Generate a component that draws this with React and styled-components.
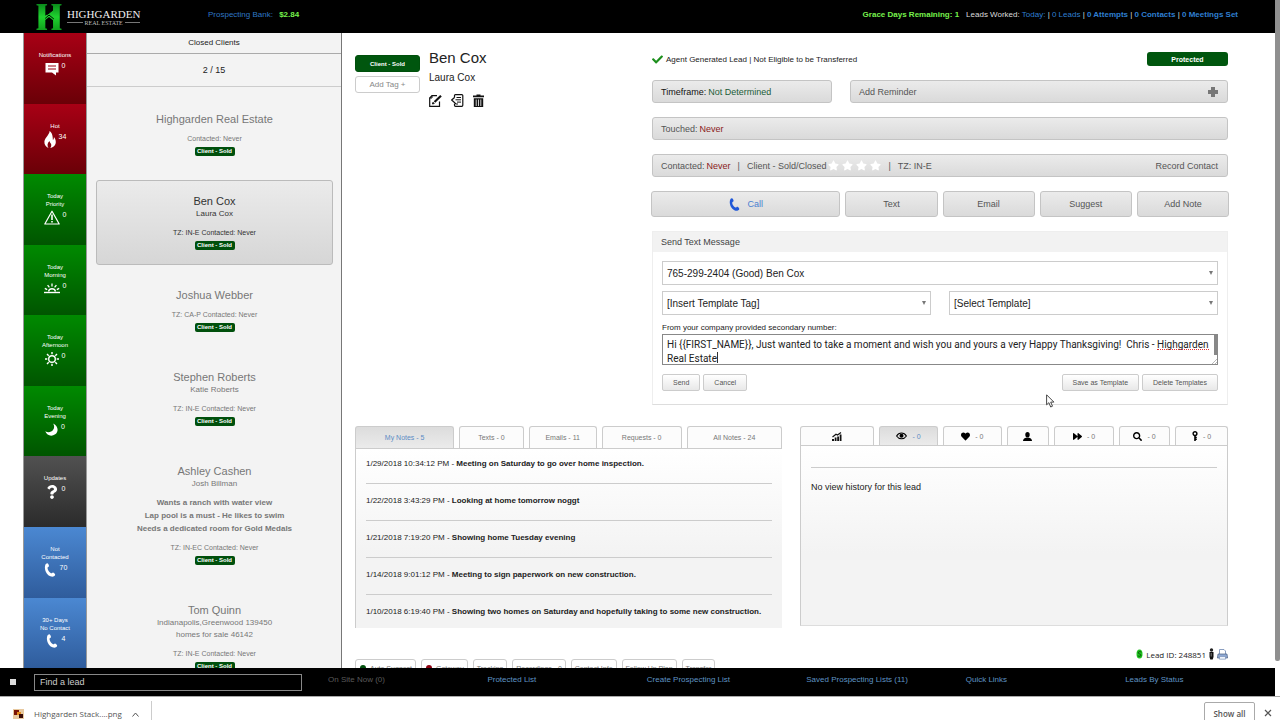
import React from "react";
import styled, { createGlobalStyle } from "styled-components";
import {
  FaCheck,
  FaHeart,
  FaForward,
  FaSearch,
  FaQuestion,
  FaStar,
} from "react-icons/fa";

const arial = `"Liberation Sans", Arial, sans-serif`;
const roboto = `Roboto, "Liberation Sans", sans-serif`;

const GlobalStyle = createGlobalStyle`
  * {
    box-sizing: border-box;
  }
  body {
    margin: 0;
    background: white;
    font-family: ${arial};
    font-size: 8px;
    color: #222;
  }
  button, input, select, textarea {
    font-family: inherit;
    margin: 0;
  }
  a {
    text-decoration: none;
    color: inherit;
  }
  h1, h2, h3, p, ul {
    margin: 0;
    padding: 0;
    font-weight: normal;
    list-style: none;
  }
`;

//icons
const MessageIcon = () => (
  <svg width="14" height="14" viewBox="0 0 14 14">
    <path d="M.5 1h13v9.500h-2.500v3L7 10.500H.5z" fill="white" />
    <path d="M3 4h8M3 7h8" stroke="#9a0012" strokeWidth="1" />
  </svg>
);

const FlameIcon = () => (
  <svg width="12" height="17" viewBox="0 0 12 17">
    <path
      d="M5.500 0C6 3 1 6.500.4 10.500.1 13.500 2 16 4.500 17 2.800 14.500 3.500 12 5.500 10c0 1.500 1.800 2.300 1.800 4 0 1.200-.4 2.200-1 3 3-.6 5.500-2.800 5.500-6C11.800 9 11 7.300 9.900 6c.1 1.300-.2 2.300-1 3C8.800 5.500 8.500 2 5.500 0z"
      fill="white"
    />
  </svg>
);

const WarningIcon = () => (
  <svg width="16" height="15" viewBox="0 0 16 15" fill="none" stroke="white">
    <path d="M8 1.200 15.200 14H.8z" strokeWidth="1.200" strokeLinejoin="round" />
    <path d="M8 4.500v5.500M8 11v1.600" strokeWidth="1.600" />
  </svg>
);

const SunriseIcon = () => (
  <svg width="16" height="14" viewBox="0 0 16 14" fill="none" stroke="white">
    <path d="M0 11.500h16" strokeWidth="1.400" />
    <path
      d="M4.500 10.500a3.600 3.600 0 0 1 7 0M8 2.500v3M3.600 4.200l1.800 2.200M12.400 4.200l-1.800 2.200M.8 7.400l2.400 1.200M15.200 7.400l-2.400 1.200"
      strokeWidth="1.300"
    />
  </svg>
);

const SunIcon = () => (
  <svg width="14" height="14" viewBox="0 0 14 14" fill="none" stroke="white">
    <circle cx="7" cy="7" r="3.300" strokeWidth="1.400" />
    <path
      d="M7 0v2.300M7 11.700V14M0 7h2.300M11.700 7H14M2 2l1.700 1.700M10.300 10.300 12 12M12 2l-1.700 1.700M3.700 10.300 2 12"
      strokeWidth="1.400"
    />
  </svg>
);

const MoonIcon = () => (
  <svg width="13" height="13" viewBox="0 0 13 13">
    <path d="M8.200.5c5 2.300 5.800 8 2 10.800C6.500 14 1.700 12.500.3 8.300c3 1.500 6 .9 7.700-1.300C9.500 5 9.500 2.800 8.200.5z" fill="white" />
  </svg>
);

const PhoneIcon = ({ size = 14 }) => (
  <svg width={size} height={size} viewBox="0 0 14 14" fill="currentColor">
    <path d="M4.200.2c.9 0 1.800 1.800 1.800 2.900 0 1-1.500.8-1.500 1.900.1 2 1.700 4.500 3.500 5.200 1 .4 1.200-1 2.200-.7 1 .4 2.200 1.700 1.900 2.600-.5 1.300-2.300 2-4 1.500C4.700 12.600 2.200 9 1.900 5 1.800 2.500 2.500.3 4.200.2z" />
  </svg>
);

const EditIcon = () => (
  <svg width="13" height="13" viewBox="0 0 13 13" fill="none" stroke="#111">
    <path d="M8 1.600H3L.7 4v8.300h9.800V7.500" strokeWidth="1.200" />
    <path d="M3 1.600V4H.7" strokeWidth="1" />
    <path d="m5.500 8 6.500-6.300" strokeWidth="2.200" />
    <path d="m3.500 10 1.700-.5-1.200-1.200z" fill="#111" />
  </svg>
);

const NoteIcon = () => (
  <svg width="13" height="13" viewBox="0 0 13 13" fill="none" stroke="#111">
    <path
      d="M3.500 3.500V1.600c0-.6.4-1 .9-1h6.400c.6 0 1 .4 1 1v9.700c0 .6-.4 1-1 1H4.500c-.6 0-1-.4-1-1V9.800M3.500 3.500.7 6l4.300 4h2"
      strokeWidth="1.200"
    />
    <path d="M5.500 3.500H10M4.500 5.800H10M6 8.100h4" strokeWidth="1" />
  </svg>
);

const TrashIcon = () => (
  <svg width="11" height="13" viewBox="0 0 11 13">
    <path d="M0 1.500h3.500V.5h4v1H11v1.800H0zM.8 4.200h9.400V13H.8z" fill="#111" />
    <path d="M3.200 5.500V12M5.500 5.500V12M7.800 5.500V12" stroke="white" strokeWidth=".8" />
  </svg>
);

const PlusIcon = () => (
  <svg width="10" height="10" viewBox="0 0 10 10">
    <path d="M5 0v10M0 5h10" stroke="#777" strokeWidth="4" />
  </svg>
);

const ChartIcon = () => (
  <svg width="10" height="9" viewBox="0 0 10 9">
    <path d="M0 7h2v2H0zM2.700 5.500h1.800V9H2.700zM5.200 4.500H7V9H5.200zM7.700 2.500h1.800V9H7.700z" fill="#111" />
    <path d="M.5 5 4 2.200l1.500.8L9 .5" stroke="#111" fill="none" strokeWidth="1.200" />
  </svg>
);

const EyeIcon = () => (
  <svg width="11" height="8" viewBox="0 0 11 8">
    <path d="M.6 4C3 0 8 0 10.400 4 8 7.700 3 7.700.6 4z" fill="none" stroke="black" strokeWidth="1.100" />
    <circle cx="5.500" cy="3.800" r="2" />
  </svg>
);

const PersonIcon = () => (
  <svg width="9" height="9" viewBox="0 0 9 9" fill="black">
    <ellipse cx="4.500" cy="2.800" rx="2.200" ry="2.800" />
    <path d="M0 9c0-2.200 1.500-3 3.200-3.300h2.600C7.500 6 9 6.800 9 9z" />
  </svg>
);

const KeyIcon = () => (
  <svg width="6" height="10" viewBox="0 0 6 10">
    <circle cx="3" cy="2.600" r="1.900" fill="none" stroke="black" strokeWidth="1.400" />
    <path d="M2.200 4.500h1.600v1.300h1v1.400h-1v.6h1v1.200h-1v1H2.200z" />
  </svg>
);

const DollarIcon = () => (
  <svg width="7" height="10" viewBox="0 0 7 10">
    <ellipse cx="3.500" cy="5" rx="3" ry="4.500" fill="#1fc41f" />
    <path d="M5.300 3.200C4 2 2 2.500 2.200 4c.4 1.200 2.800.8 2.800 2.200 0 1.300-2 1.500-3.200.5" stroke="#0a4a0a" fill="none" strokeWidth=".9" />
  </svg>
);

const PhoneBoxIcon = () => (
  <svg width="5" height="12" viewBox="0 0 5 12">
    <circle cx="2.500" cy="2" r="1.700" fill="#222" />
    <path d="M.5 4h4v5l-.8 2.500H1.300L.5 9z" fill="#111" />
    <path d="M2.200 5v3.500" stroke="#999" strokeWidth=".8" />
  </svg>
);

const PrinterIcon = () => (
  <svg width="11" height="11" viewBox="0 0 11 11">
    <path d="M2.500.5h4.500l1.500 1.500v4h-6z" fill="white" stroke="#6d86b0" strokeWidth=".8" />
    <path d="M1 5h9l.6 4H.4z" fill="#8fa9d4" stroke="#4c5f80" strokeWidth=".7" />
    <path d="M2.500 7.500h6v2.700h-6z" fill="#eef3fb" stroke="#6d86b0" strokeWidth=".6" />
  </svg>
);

const LogoMark = () => (
  <svg width="28" height="26" viewBox="0 0 28 27">
    <defs>
      <linearGradient id="leaf" x1="0" y1="0" x2="0" y2="1">
        <stop offset="0" stopColor="#0b8a1c" />
        <stop offset="0.5" stopColor="#1fd22f" />
        <stop offset="1" stopColor="#0fa01c" />
      </linearGradient>
    </defs>
    <path
      d="M1 0h11v1.200l-1.800.5v10.500l8-6V1.700L16.500 1.200V0H27v1.200l-1.800.5v23.600l1.800.5V27H16.500v-1.200l1.700-.5v-8.500L14 13.500l-3.800 3v8.800l1.800.5V27H1v-1.200l2-.5V1.700L1 1.200z"
      fill="url(#leaf)"
    />
    <path d="m10 15 4-3.500 5 4M12 11l6-4.500" stroke="black" strokeWidth="1" fill="none" />
  </svg>
);

const Pointer = styled.svg`
  position: absolute;
  left: 393px;
  bottom: -4px;
`;

//data
const tiles = [
  { label: ["Notifications"], icon: <MessageIcon />, count: 0, tone: "red" },
  { label: ["Hot"], icon: <FlameIcon />, count: 34, tone: "red" },
  { label: ["Today", "Priority"], icon: <WarningIcon />, count: 0, tone: "green" },
  { label: ["Today", "Morning"], icon: <SunriseIcon />, count: 0, tone: "green" },
  { label: ["Today", "Afternoon"], icon: <SunIcon />, count: 0, tone: "green" },
  { label: ["Today", "Evening"], icon: <MoonIcon />, count: 0, tone: "green" },
  { label: ["Updates"], icon: <FaQuestion size={14} />, count: 0, tone: "gray" },
  { label: ["Not", "Contacted"], icon: <PhoneIcon />, count: 70, tone: "blue" },
  { label: ["30+ Days", "No Contact"], icon: <PhoneIcon />, count: 4, tone: "blue" },
];

const tones = {
  red: "#a80015, #6a0007",
  green: "#008a00, #005500",
  gray: "#515151, #2b2b2b",
  blue: "#4b88d2, #2f5c9c",
};

const leads = [
  { name: "Highgarden Real Estate", status: "Contacted: Never" },
  { name: "Ben Cox", sub: ["Laura Cox"], status: "TZ: IN-E Contacted: Never", active: true },
  { name: "Joshua Webber", status: "TZ: CA-P Contacted: Never" },
  { name: "Stephen Roberts", sub: ["Katie Roberts"], status: "TZ: IN-E Contacted: Never" },
  {
    name: "Ashley Cashen",
    sub: ["Josh Billman"],
    wants: [
      "Wants a ranch with water view",
      "Lap pool is a must - He likes to swim",
      "Needs a dedicated room for Gold Medals",
    ],
    status: "TZ: IN-EC Contacted: Never",
  },
  {
    name: "Tom Quinn",
    sub: ["Indianapolis,Greenwood 139450", "homes for sale 46142"],
    status: "TZ: IN-E Contacted: Never",
  },
];

const noteTabs = [
  { label: "My Notes - 5", size: 100, active: true },
  { label: "Texts - 0", size: 64 },
  { label: "Emails - 11", size: 68 },
  { label: "Requests - 0", size: 80 },
  { label: "All Notes - 24", size: 96 },
];

const notes = [
  ["1/29/2018 10:34:12 PM", "Meeting on Saturday to go over home inspection."],
  ["1/22/2018 3:43:29 PM", "Looking at home tomorrow noggt"],
  ["1/21/2018 7:19:20 PM", "Showing home Tuesday evening"],
  ["1/14/2018 9:01:12 PM", "Meeting to sign paperwork on new construction."],
  ["1/10/2018 6:19:40 PM", "Showing two homes on Saturday and hopefully taking to some new construction."],
];

const activityTabs = [
  { name: "Stats", icon: <ChartIcon />, size: 75 },
  { name: "Views", icon: <EyeIcon />, size: 59, count: true, active: true },
  { name: "Favorites", icon: <FaHeart size={9} />, size: 59, count: true },
  { name: "Profile", icon: <PersonIcon />, size: 42 },
  { name: "Forwards", icon: <FaForward size={9} />, size: 60, count: true },
  { name: "Searches", icon: <FaSearch size={9} />, size: 51, count: true },
  { name: "Keys", icon: <KeyIcon />, size: 53, count: true },
];

const tools = [
  { label: "Auto Suggest", dot: "#00500c" },
  { label: "Gateway", dot: "#8c0010" },
  { label: "Tracking" },
  { label: "Recordings - 0" },
  { label: "Contact Info" },
  { label: "Follow Up Plan" },
  { label: "Transfer" },
];

const footerLinks = [
  "Protected List",
  "Create Prospecting List",
  "Saved Prospecting Lists (11)",
  "Quick Links",
  "Leads By Status",
];

const message =
  "Hi {{FIRST_NAME}}, Just wanted to take a moment and wish you and yours a very Happy Thanksgiving!  Chris - Highgarden\nReal Estate";

const TopBar = () => (
  <StyledTopBar>
    <Logo href="#">
      <LogoMark />
      <LogoText>
        HIGHGARDEN
        <small>REAL ESTATE</small>
      </LogoText>
    </Logo>
    <Bank>
      Prospecting Bank: <b>$2.84</b>
    </Bank>
    <Worked>
      <b>Grace Days Remaining: 1</b>
      <span>
        Leads Worked: <a href="#">Today:</a> | <a href="#">0 Leads</a> |{" "}
        <a href="#"><strong>0 Attempts</strong></a> | <a href="#"><strong>0 Contacts</strong></a> |{" "}
        <a href="#"><strong>0 Meetings Set</strong></a>
      </span>
    </Worked>
  </StyledTopBar>
);

const Sidebar = () => (
  <StyledSidebar>
    {tiles.map((tile) => (
      <Tile key={tile.label.join(" ")} $tone={tile.tone}>
        {tile.label.map((line) => (
          <span key={line}>{line}</span>
        ))}
        <TileIcon>
          {tile.icon}
          <sup>{tile.count}</sup>
        </TileIcon>
      </Tile>
    ))}
  </StyledSidebar>
);

const LeadList = () => (
  <StyledList>
    <ListTitle>Closed Clients</ListTitle>
    <ListCount>2 / 15</ListCount>
    <Leads>
      {leads.map((lead) => (
        <Lead key={lead.name} $active={lead.active}>
          <h3>{lead.name}</h3>
          {lead.sub && lead.sub.map((line) => <LeadSub key={line}>{line}</LeadSub>)}
          {lead.wants && (
            <Wants>
              {lead.wants.map((line) => (
                <p key={line}>{line}</p>
              ))}
            </Wants>
          )}
          <LeadStatus>{lead.status}</LeadStatus>
          <Badge>Client - Sold</Badge>
        </Lead>
      ))}
    </Leads>
  </StyledList>
);

const TextForm = () => (
  <Panel>
    <PanelTitle>Send Text Message</PanelTitle>
    <PanelBody>
      <SelectBox>
        <select aria-label="Phone number">
          <option>765-299-2404 (Good) Ben Cox</option>
        </select>
      </SelectBox>
      <SelectRow>
        <SelectBox>
          <select aria-label="Template tag">
            <option>[Insert Template Tag]</option>
          </select>
        </SelectBox>
        <SelectBox>
          <select aria-label="Template">
            <option>[Select Template]</option>
          </select>
        </SelectBox>
      </SelectRow>
      <label htmlFor="message">From your company provided secondary number:</label>
      <MessageBox>
        <textarea id="message" defaultValue={message} spellCheck="false" />
        <Squiggle />
        <Caret />
        <Thumb />
        <Grip width="5" height="5" viewBox="0 0 5 5">
          <path d="M0 5 5 0M3 5l2-2" stroke="#999" strokeWidth=".7" />
        </Grip>
      </MessageBox>
      <FormButtons>
        <SmallButton>Send</SmallButton>
        <SmallButton>Cancel</SmallButton>
        <Spacer />
        <SmallButton>Save as Template</SmallButton>
        <SmallButton>Delete Templates</SmallButton>
      </FormButtons>
    </PanelBody>
    <Pointer width="9" height="14" viewBox="0 0 9 14">
      <path d="M.6.8v10l2.300-2.100 1.800 4.300 1.800-.8-1.800-4.100h3.200z" fill="white" stroke="#333" strokeWidth=".9" />
    </Pointer>
  </Panel>
);

const App = () => {
  return (
    <Page>
      <GlobalStyle />
      <Content>
        <TopBar />
        <Body>
          <Sidebar />
          <LeadList />
          <Main>
            <Overview>
              <Person>
                <Tags>
                  <TagButton $solid>Client - Sold</TagButton>
                  <TagButton>Add Tag +</TagButton>
                </Tags>
                <div>
                  <h1>Ben Cox</h1>
                  <h2>Laura Cox</h2>
                  <Actions>
                    <IconButton aria-label="Edit"><EditIcon /></IconButton>
                    <IconButton aria-label="Notes"><NoteIcon /></IconButton>
                    <IconButton aria-label="Delete"><TrashIcon /></IconButton>
                  </Actions>
                </div>
              </Person>
              <Details>
                <Origin>
                  <FaCheck size={11} color="#1d8f1d" />
                  <span>Agent Generated Lead | Not Eligible to be Transferred</span>
                  <Protected>Protected</Protected>
                </Origin>
                <Split>
                  <Bar>
                    <b>Timeframe:</b> <Mark $color="#1c5c38">Not Determined</Mark>
                  </Bar>
                  <Bar as="button">
                    Add Reminder <Spacer /> <PlusIcon />
                  </Bar>
                </Split>
                <Bar>
                  Touched: <Mark $color="#8a1a1a">Never</Mark>
                </Bar>
                <Bar>
                  Contacted: <Mark $color="#8a1a1a">Never</Mark>
                  <Divider>|</Divider>
                  Client - Sold/Closed
                  <Stars>
                    {[1, 2, 3, 4].map((n) => (
                      <FaStar key={n} size={11} />
                    ))}
                  </Stars>
                  <Divider>|</Divider>
                  TZ: IN-E
                  <Spacer />
                  <a href="#">Record Contact</a>
                </Bar>
                <Contact>
                  <BigButton $call>
                    <PhoneIcon size={13} /> Call
                  </BigButton>
                  <BigButton>Text</BigButton>
                  <BigButton>Email</BigButton>
                  <BigButton>Suggest</BigButton>
                  <BigButton>Add Note</BigButton>
                </Contact>
                <TextForm />
              </Details>
            </Overview>
            <History>
              <section>
                <Tabs>
                  {noteTabs.map((tab) => (
                    <Tab key={tab.label} $size={tab.size} $active={tab.active} $tall>
                      {tab.label}
                    </Tab>
                  ))}
                </Tabs>
                <Notes>
                  {notes.map(([date, text]) => (
                    <li key={date}>
                      {date} - <b>{text}</b>
                    </li>
                  ))}
                </Notes>
              </section>
              <section>
                <Tabs>
                  {activityTabs.map((tab) => (
                    <Tab key={tab.name} aria-label={tab.name} $size={tab.size} $active={tab.active}>
                      {tab.icon}
                      {tab.count && <span>- 0</span>}
                    </Tab>
                  ))}
                </Tabs>
                <Activity>
                  <p>No view history for this lead</p>
                </Activity>
              </section>
            </History>
            <Extras>
              <Tools>
                {tools.map((tool) => (
                  <Tool key={tool.label}>
                    {tool.dot && <Dot $color={tool.dot} />}
                    {tool.label}
                  </Tool>
                ))}
              </Tools>
              <LeadId>
                <DollarIcon /> Lead ID: 248851 <PhoneBoxIcon />
                <PrinterIcon />
              </LeadId>
            </Extras>
          </Main>
        </Body>
        <Footer>
          <Finder>
            <i />
            <input aria-label="Find a lead" placeholder="Find a lead" />
          </Finder>
          <FooterLinks>
            <span>On Site Now (0)</span>
            {footerLinks.map((link) => (
              <a href="#" key={link}>
                {link}
              </a>
            ))}
          </FooterLinks>
        </Footer>
        <ScrollTrack>
          <ScrollThumb />
        </ScrollTrack>
      </Content>
      <Downloads>
        <File>
          <svg width="11" height="10" viewBox="0 0 11 10">
            <path d="M0 0h11v10H0z" fill="#e8c9a0" />
            <path d="M1 1h5v5H1z" fill="#7a1408" />
            <path d="M4 3h4v3H4z" fill="#e38a1c" />
            <path d="M6 5h4v4H6z" fill="#3a0c06" />
          </svg>
          Highgarden Stack....png
          <svg width="7" height="5" viewBox="0 0 7 5">
            <path d="m.5 4.500 3-3.500 3 3.500" fill="none" stroke="#555" />
          </svg>
        </File>
        <Spacer />
        <ShowAll>Show all</ShowAll>
        <IconButton aria-label="Close">
          <svg width="8" height="8" viewBox="0 0 8 8">
            <path d="m1 1 6 6M7 1 1 7" stroke="#555" strokeWidth="1.200" />
          </svg>
        </IconButton>
      </Downloads>
    </Page>
  );
};

//styled components
const Page = styled.div`
  height: 100vh;
  display: flex;
  flex-direction: column;
  overflow: hidden;
`;
const Content = styled.div`
  flex: 1;
  min-height: 0;
  display: grid;
  grid-template-columns: 1fr 5px;
  grid-template-rows: auto minmax(0, 1fr) auto;
`;
const ScrollTrack = styled.div`
  grid-column: 2;
  grid-row: 1 / 4;
  background: white;
`;
const ScrollThumb = styled.div`
  height: 95%;
  background: #8f8f8f;
  border-radius: 0 0 2px 2px;
`;
const Spacer = styled.span`
  flex: 1;
`;
const StyledTopBar = styled.header`
  display: flex;
  align-items: center;
  height: 33px;
  padding: 0 37px 4px 35px;
  background: black;
  color: #ddd;
  line-height: 12px;
`;
const Logo = styled.a`
  display: flex;
  align-items: center;
  gap: 4px;
  width: 173px;
  padding-top: 5px;
`;
const LogoText = styled.span`
  font-family: "Liberation Serif", serif;
  font-size: 11px;
  line-height: 11px;
  color: #eee;
  small {
    display: flex;
    align-items: center;
    gap: 2px;
    font-size: 6px;
    line-height: 6px;
    white-space: nowrap;
    color: #bbb;
  }
  small::before,
  small::after {
    content: "";
    flex: 1;
    height: 1px;
    background: #777;
  }
`;
const Bank = styled.div`
  flex: 1;
  color: #2f77c4;
  b {
    margin-left: 4px;
    color: #76f04c;
  }
`;
const Worked = styled.div`
  b {
    margin-right: 7px;
    color: #76f04c;
  }
  a {
    color: #2f7fd0;
  }
`;
const Body = styled.div`
  display: flex;
  min-height: 0;
  padding-left: 23px;
`;
const StyledSidebar = styled.nav`
  flex: 0 0 64px;
  display: flex;
  flex-direction: column;
  border: solid #999;
  border-width: 0 1px;
`;
const Tile = styled.button`
  flex: 1;
  display: flex;
  flex-direction: column;
  align-items: center;
  padding: 18px 0 0;
  border: 0;
  background: linear-gradient(${({ $tone }) => tones[$tone]});
  color: white;
  font-size: 6px;
  line-height: 8px;
`;
const TileIcon = styled.span`
  display: flex;
  align-items: center;
  gap: 3px;
  height: 17px;
  margin-top: 1px;
  sup {
    align-self: flex-start;
    padding-top: 2px;
    line-height: 8px;
    font-size: 7px;
  }
`;
const StyledList = styled.aside`
  flex: 0 0 255px;
  overflow: hidden;
  border-right: 1px solid #777;
  background: #f3f3f3;
  text-align: center;
`;
const ListTitle = styled.h2`
  line-height: 20px;
  font-size: 8px;
  border-bottom: 1px solid #aaa;
`;
const ListCount = styled.p`
  line-height: 32px;
  font-size: 9px;
  border-bottom: 1px solid #ccc;
`;
const Leads = styled.ul`
  display: flex;
  flex-direction: column;
  gap: 9px;
  padding: 11px 8px 0 9px;
`;
const Lead = styled.li`
  padding: 13px 0 14px;
  border: 1px solid ${({ $active }) => ($active ? "#bbb" : "transparent")};
  border-radius: 3px;
  background: ${({ $active }) => ($active ? "linear-gradient(#ebebeb, #d6d6d6)" : "none")};
  color: ${({ $active }) => ($active ? "#333" : "#777")};
  h3 {
    font-size: 11px;
    line-height: 14px;
  }
`;
const LeadSub = styled.p`
  line-height: 12px;
`;
const Wants = styled.div`
  margin-top: 6px;
  line-height: 13px;
  p {
    font-weight: bold;
  }
`;
const LeadStatus = styled.p`
  margin-top: 6px;
  padding-top: 1px;
  font-size: 7px;
  line-height: 12px;
`;
const Badge = styled.span`
  display: block;
  width: 40px;
  margin: 2px auto 0;
  border-radius: 2px;
  background: #00500c;
  color: white;
  font-size: 6px;
  font-weight: bold;
  line-height: 9px;
`;
const Main = styled.main`
  flex: 1;
  min-width: 0;
  overflow: hidden;
  padding: 19px 47px 0 13px;
`;
const Overview = styled.div`
  display: grid;
  grid-template-columns: 297px 1fr;
`;
const Person = styled.div`
  display: flex;
  gap: 9px;
  h1 {
    font-size: 15px;
    line-height: 18px;
    margin-top: -3px;
  }
  h2 {
    margin-top: 5px;
    font-size: 10px;
    line-height: 12px;
  }
`;
const Tags = styled.div`
  display: flex;
  flex-direction: column;
  gap: 4px;
  width: 65px;
  padding-top: 3px;
`;
const TagButton = styled.button`
  height: 17px;
  padding: 0;
  border: 1px solid ${({ $solid }) => ($solid ? "#00500c" : "#ccc")};
  border-radius: 3px;
  background: ${({ $solid }) => ($solid ? "#00560e" : "white")};
  color: ${({ $solid }) => ($solid ? "white" : "#888")};
  font-size: ${({ $solid }) => ($solid ? "6px" : "8px")};
  font-weight: ${({ $solid }) => ($solid ? "bold" : "normal")};
`;
const Actions = styled.div`
  display: flex;
  gap: 9px;
  margin-top: 10px;
`;
const IconButton = styled.button`
  display: flex;
  padding: 0;
  border: 0;
  background: none;
`;
const Details = styled.div`
  display: flex;
  flex-direction: column;
  gap: 14px;
`;
const Origin = styled.div`
  display: flex;
  align-items: center;
  gap: 3px;
  height: 14px;
  span {
    flex: 1;
  }
`;
const Protected = styled.button`
  width: 81px;
  height: 14px;
  padding: 0;
  border: 0;
  border-radius: 3px;
  background: #00560e;
  color: white;
  font-size: 7px;
  font-weight: bold;
`;
const Split = styled.div`
  display: grid;
  grid-template-columns: 180fr 378fr;
  gap: 18px;
`;
const Bar = styled.div`
  display: flex;
  align-items: center;
  gap: 2px;
  height: 23px;
  padding: 0 9px 0 8px;
  border: 1px solid #c4c4c4;
  border-radius: 3px;
  background: linear-gradient(#ebebeb, #dadada);
  color: #555;
  font-size: 9px;
  b {
    font-weight: normal;
    color: #111;
  }
`;
const Mark = styled.span`
  color: ${({ $color }) => $color};
`;
const Divider = styled.span`
  margin: 0 5px;
`;
const Stars = styled.span`
  display: flex;
  gap: 3px;
  color: white;
`;
const Contact = styled.div`
  display: grid;
  grid-template-columns: 189fr repeat(4, 92fr);
  gap: 5px;
  margin: 0 -1px;
`;
const BigButton = styled.button`
  display: flex;
  align-items: center;
  justify-content: center;
  gap: 6px;
  height: 26px;
  border: 1px solid #c4c4c4;
  border-radius: 3px;
  background: linear-gradient(#ebebeb, #dadada);
  color: ${({ $call }) => ($call ? "#4a7fd0" : "#555")};
  font-size: 9px;
  svg {
    color: #2058d8;
  }
`;
const Panel = styled.section`
  position: relative;
  border: 1px solid #eee;
  border-bottom-color: #ddd;
`;
const PanelTitle = styled.h2`
  padding-left: 8px;
  background: #f2f2f2;
  color: #444;
  font-size: 9px;
  line-height: 20px;
`;
const PanelBody = styled.form`
  padding: 9px 9px 13px;
  label {
    display: block;
    margin-top: 7px;
    line-height: 12px;
  }
`;
const SelectRow = styled.div`
  display: grid;
  grid-template-columns: 1fr 1fr;
  gap: 18px;
  margin-top: 6px;
`;
const SelectBox = styled.div`
  position: relative;
  select {
    display: block;
    width: 100%;
    height: 24px;
    padding: 0 4px;
    border: 1px solid #ccc;
    border-radius: 0;
    background: white;
    color: #222;
    font-size: 10px;
    appearance: none;
  }
  &::after {
    content: "";
    position: absolute;
    top: 10px;
    right: 5px;
    border: 2px solid transparent;
    border-top: 4px solid #777;
    border-bottom: 0;
  }
`;
const MessageBox = styled.div`
  position: relative;
  textarea {
    display: block;
    width: 100%;
    height: 31px;
    padding: 3px 0 0 4px;
    border: 1px solid #888;
    border-radius: 0;
    color: #222;
    font-family: ${roboto};
    font-size: 10px;
    line-height: 14px;
    resize: none;
    overflow: hidden;
  }
`;
const Squiggle = styled.span`
  position: absolute;
  top: 15px;
  right: 9px;
  width: 52px;
  border-bottom: 1px dotted #d33;
`;
const Caret = styled.span`
  position: absolute;
  top: 18px;
  left: 55px;
  width: 1px;
  height: 11px;
  background: #333;
`;
const Thumb = styled.span`
  position: absolute;
  top: 1px;
  right: 0;
  width: 4px;
  height: 20px;
  background: #888;
`;
const Grip = styled.svg`
  position: absolute;
  right: 1px;
  bottom: 1px;
`;
const FormButtons = styled.div`
  display: flex;
  gap: 3px;
  margin-top: 9px;
`;
const SmallButton = styled.button.attrs({ type: "button" })`
  height: 17px;
  padding: 0 10px;
  border: 1px solid #ccc;
  border-radius: 2px;
  background: linear-gradient(white, #e8e8e8);
  color: #555;
  font-size: 7px;
`;
const History = styled.div`
  display: grid;
  grid-template-columns: 427fr 428fr;
  gap: 18px;
  margin-top: 21px;
`;
const Tabs = styled.div`
  display: flex;
  gap: 5px;
`;
const Tab = styled.button`
  flex: ${({ $size }) => $size} 1 0;
  display: flex;
  align-items: center;
  justify-content: center;
  gap: 5px;
  height: ${({ $tall }) => ($tall ? "22px" : "19px")};
  padding: 0;
  border: 1px solid #ccc;
  border-bottom: 0;
  border-radius: 3px 3px 0 0;
  background: ${({ $active }) => ($active ? "linear-gradient(#dcdcdc, #ebebeb)" : "#fcfcfc")};
  color: ${({ $active }) => ($active ? "#5b8cc4" : "#777")};
  font-size: 7px;
  svg {
    color: black;
  }
`;
const Notes = styled.ul`
  padding: 9px 10px 10px;
  border: solid #ccc;
  border-width: 1px 0 0 1px;
  background: linear-gradient(white, #f3f3f3 60%);
  li {
    padding-bottom: 13px;
    line-height: 12px;
  }
  li + li {
    padding-top: 11px;
    border-top: 1px solid #ccc;
  }
  li:last-child {
    padding-bottom: 0;
  }
`;
const Activity = styled.div`
  height: 181px;
  padding: 21px 10px 0;
  border: 1px solid #ccc;
  border-bottom-color: #ddd;
  background: linear-gradient(white, #f3f3f3 60%);
  p {
    padding-top: 13px;
    border-top: 1px solid #ccc;
    font-size: 9px;
    line-height: 12px;
  }
`;
const Extras = styled.div`
  display: flex;
  justify-content: space-between;
  margin-top: 20px;
`;
const Tools = styled.div`
  display: flex;
  gap: 5px;
  padding-top: 11px;
`;
const Tool = styled.button`
  display: flex;
  align-items: center;
  gap: 4px;
  height: 18px;
  padding: 0 3px;
  border: 1px solid #ccc;
  border-radius: 3px;
  background: white;
  color: #777;
  font-size: 7px;
`;
const Dot = styled.i`
  width: 6px;
  height: 6px;
  margin-left: 1px;
  border-radius: 50%;
  background: ${({ $color }) => $color};
`;
const LeadId = styled.div`
  display: flex;
  align-items: center;
  gap: 3px;
  height: 12px;
  font-family: "Open Sans", sans-serif;
  font-size: 8px;
`;
const Footer = styled.footer`
  display: flex;
  height: 28px;
  background: black;
`;
const Finder = styled.div`
  display: flex;
  align-items: center;
  gap: 18px;
  flex: 0 0 328px;
  padding: 0 26px 0 10px;
  i {
    width: 6px;
    height: 6px;
    background: #ddd;
  }
  input {
    flex: 1;
    height: 17px;
    padding: 0 5px;
    border: 1px solid #888;
    background: black;
    font-size: 9px;
  }
  input::placeholder {
    color: #ccc;
  }
`;
const FooterLinks = styled.nav`
  flex: 1;
  display: grid;
  grid-template-columns: repeat(5, 100fr) 94fr;
  padding-top: 6px;
  line-height: 12px;
  white-space: nowrap;
  color: #5a5a5a;
  a {
    color: #5f94c4;
  }
`;
const Downloads = styled.div`
  display: flex;
  align-items: flex-start;
  height: 24px;
  padding-right: 8px;
  border-top: 1px solid #aaa;
  overflow: hidden;
  font-family: "Open Sans", sans-serif;
  font-size: 8px;
  line-height: 10px;
  color: #555;
  ${IconButton} {
    margin-top: 12px;
  }
`;
const File = styled.div`
  display: flex;
  align-items: center;
  gap: 10px;
  height: 26px;
  padding: 0 12px 0 13px;
  margin-top: 4px;
  border-right: 1px solid #ccc;
`;
const ShowAll = styled.button`
  flex: none;
  width: 51px;
  height: 22px;
  margin: 5px 9px 0 0;
  border: 1px solid #aaa;
  border-radius: 2px;
  background: white;
  color: #555;
  font-size: 8px;
  font-weight: 600;
`;

export default App;
